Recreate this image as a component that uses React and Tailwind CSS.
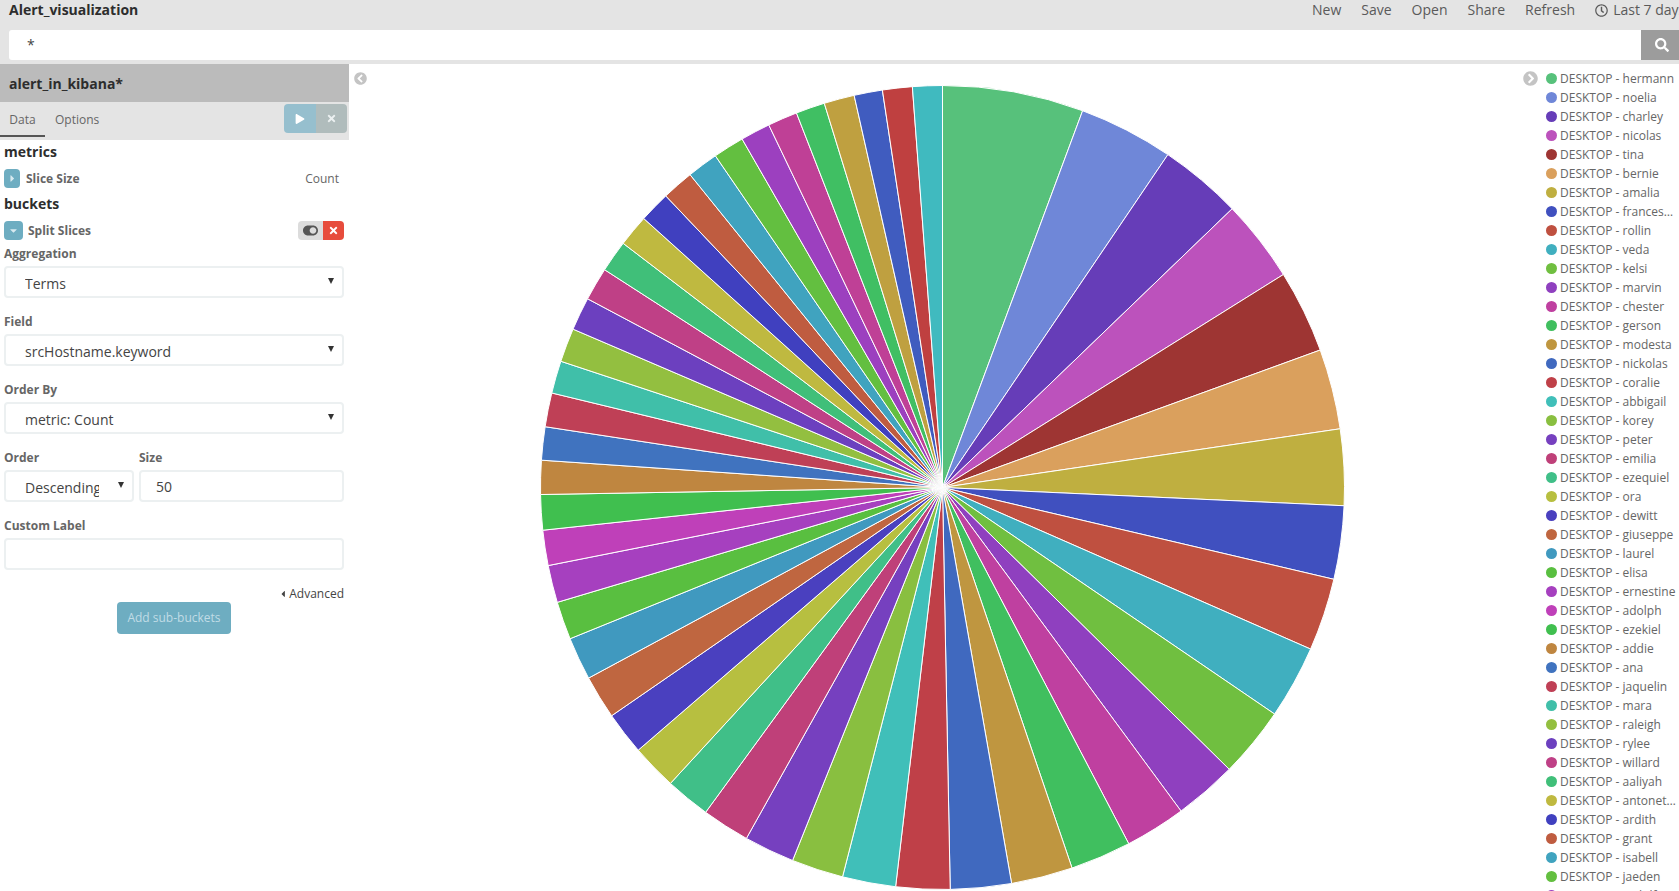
import {
  FaCaretDown,
  FaCaretLeft,
  FaCaretRight,
  FaChevronCircleLeft,
  FaChevronCircleRight,
  FaPlay,
  FaRegClock,
  FaSearch,
  FaTimes,
  FaToggleOn,
} from "react-icons/fa";

const CX = 402.5;
const CY = 402.5;
const R = 402;

// slice ends, clockwise from 12 o'clock, in degrees
const ANGLES = [
  20.4, 34.1, 46.1, 58, 70, 81.6, 92.6, 103.2, 113.7, 124.3, 134.5, 143.6, 152.4, 161.2, 170.1,
  178.9, 186.7, 194.4, 201.9, 209.2, 216.1, 222.6, 229.2, 235.4, 241.7, 247.9, 253.4, 258.8, 263.9,
  269, 273.9, 278.7, 283.6, 288.3, 293.2, 298, 302.8, 307.4, 312, 316.5, 321.1, 325.6, 330.1, 334.4,
  338.7, 342.9, 347.3, 351.4, 355.7, 360,
];

const COLORS = [
  "#57c17b", "#6f87d8", "#663db8", "#bc52bc", "#9e3533", "#daa05d", "#bfaf40", "#4050bf", "#bf5040", "#40afbf",
  "#70bf40", "#8f40bf", "#bf40a0", "#40bf5f", "#bf9640", "#4069bf", "#bf4048", "#40bfb9", "#89bf40", "#7640bf",
  "#bf4079", "#40bf88", "#b7bf40", "#4a40bf", "#bf6640", "#4099bf", "#59bf40", "#a640bf", "#bf40b9", "#40bf4f",
  "#bf8640", "#4073bf", "#bf4056", "#40bfa9", "#93bf40", "#6c40bf", "#bf4086", "#40bf79", "#bfb940", "#4040bf",
  "#bf5c40", "#40a3bf", "#63bf40", "#9c40bf", "#bf4096", "#40bf63", "#bfa040", "#405cbf", "#bf4040", "#40babf",
];

const NAMES = [
  "hermann", "noelia", "charley", "nicolas", "tina", "bernie", "amalia", "frances…", "rollin", "veda",
  "kelsi", "marvin", "chester", "gerson", "modesta", "nickolas", "coralie", "abbigail", "korey", "peter",
  "emilia", "ezequiel", "ora", "dewitt", "giuseppe", "laurel", "elisa", "ernestine", "adolph", "ezekiel",
  "addie", "ana", "jaquelin", "mara", "raleigh", "rylee", "willard", "aaliyah", "antonet…", "ardith",
  "grant", "isabell", "jaeden", "rudolf",
];

function point(deg) {
  const a = (deg * Math.PI) / 180;
  return `${(CX + R * Math.sin(a)).toFixed(2)} ${(CY - R * Math.cos(a)).toFixed(2)}`;
}

function Pie() {
  return (
    <svg width="805" height="805" viewBox="0 0 805 805" className="block">
      {ANGLES.map((end, i) => {
        const start = i === 0 ? 0 : ANGLES[i - 1];
        return (
          <path
            key={i}
            d={`M${CX} ${CY} L${point(start)} A${R} ${R} 0 0 1 ${point(end)} Z`}
            fill={COLORS[i]}
            stroke="#fff"
            strokeWidth="1"
          />
        );
      })}
    </svg>
  );
}

function Label({ children }) {
  return <div className="text-[12px] leading-[17px] font-bold text-[#666]">{children}</div>;
}

function Select({ children, clip = "mr-[24px]" }) {
  return (
    <div className="relative flex h-8 w-full items-center rounded border-2 border-[#ecf0f1] bg-white pl-[19px] text-[14px] text-[#444]">
      <span className={`${clip} block min-w-0 flex-1 overflow-hidden whitespace-nowrap pt-[2px]`}>{children}</span>
      <span className="absolute right-[8px] top-[10px] h-0 w-0 border-x-[3px] border-t-[6px] border-x-transparent border-t-[#333]" />
    </div>
  );
}

function Sidebar() {
  return (
    <aside className="w-[349px] shrink-0">
      <div className="flex h-[38px] items-center bg-[#bbb] pl-[9px] text-[14px] font-bold text-[#2d2d2d]">alert_in_kibana*</div>
      <div className="flex h-[38px] bg-[#e4e4e4] text-[12px] text-[#666]">
        <div className="flex h-[35px] w-[45px] items-center justify-center border-b-[2px] border-[#555] pt-[2px]">Data</div>
        <div className="ml-[10px] flex h-[35px] items-center">Options</div>
        <div className="ml-auto mr-[2px] mt-[2px] flex h-[29px] overflow-hidden rounded">
          <div className="flex w-[32px] items-center justify-center bg-[#96bfce] text-white"><FaPlay size={10} /></div>
          <div className="flex w-[31px] items-center justify-center bg-[#b0bcbc] text-[#ecf0f1]"><FaTimes size={11} /></div>
        </div>
      </div>

      <div className="pl-[4px] pr-[5px]">
        <div className="mt-[2px] text-[14px] font-bold leading-[20px] text-[#2d2d2d]">metrics</div>
        <div className="mt-[7px] flex h-[19px] items-center">
          <span className="flex h-[19px] w-[16px] items-center justify-center rounded-sm bg-[#6eadc1] text-[#d8eaf0]"><FaCaretRight size={11} /></span>
          <span className="ml-[6px] text-[12px] font-bold text-[#666]">Slice Size</span>
          <span className="ml-auto mr-[5px] text-[12px] text-[#666]">Count</span>
        </div>
        <div className="mt-[6px] text-[14px] font-bold leading-[20px] text-[#2d2d2d]">buckets</div>
        <div className="mt-[7px] flex h-[19px] items-center">
          <span className="flex h-[19px] w-[19px] items-center justify-center rounded-sm bg-[#6eadc1] text-[#d8eaf0]"><FaCaretDown size={11} /></span>
          <span className="ml-[5px] text-[12px] font-bold text-[#666]">Split Slices</span>
          <div className="ml-auto flex h-[19px] overflow-hidden rounded-sm">
            <span className="flex w-[25px] items-center justify-center bg-[#dcdcdc] text-[#555]"><FaToggleOn size={15} /></span>
            <span className="flex w-[21px] items-center justify-center bg-[#e74c3c] text-white"><FaTimes size={11} /></span>
          </div>
        </div>

        <div className="mt-[5px]"><Label>Aggregation</Label></div>
        <div className="mt-[4px]"><Select>Terms</Select></div>

        <div className="mt-[15px]"><Label>Field</Label></div>
        <div className="mt-[4px]"><Select>srcHostname.keyword</Select></div>

        <div className="mt-[15px]"><Label>Order By</Label></div>
        <div className="mt-[4px]"><Select>metric: Count</Select></div>

        <div className="mt-[15px] flex gap-[5px]">
          <div className="w-[130px]">
            <Label>Order</Label>
            <div className="mt-[4px]"><Select clip="mr-[33px]">Descending</Select></div>
          </div>
          <div className="flex-1">
            <Label>Size</Label>
            <div className="mt-[4px] flex h-8 items-center rounded border-2 border-[#ecf0f1] pl-[15px] text-[14px] text-[#444]">50</div>
          </div>
        </div>

        <div className="mt-[15px]"><Label>Custom Label</Label></div>
        <div className="mt-[4px] h-8 rounded border-2 border-[#ecf0f1]" />

        <div className="mt-[15px] flex items-center justify-end text-[12px] leading-[17px] text-[#444]">
          <FaCaretLeft size={10} className="mr-[1px]" />
          Advanced
        </div>
        <button className="mx-auto block h-8 w-[114px] rounded-sm bg-[#6eadc1] text-[12px] text-[#c0dce6]">Add sub-buckets</button>
      </div>
    </aside>
  );
}

function Legend() {
  return (
    <div className="absolute right-0 top-[5px] w-[151px]">
      {NAMES.map((name, i) => (
        <div key={name} className="flex h-[19px] items-center text-[12px] text-[#666]">
          <span className="ml-[18px] h-[11px] w-[11px] shrink-0 rounded-full" style={{ backgroundColor: COLORS[i] }} />
          <span className="ml-[3px] whitespace-nowrap">DESKTOP - {name}</span>
        </div>
      ))}
    </div>
  );
}

export default function App() {
  return (
    <div className="h-[891px] w-[1679px] overflow-hidden bg-white font-['Open_Sans',sans-serif]">
      <header className="bg-[#e4e4e4] pb-[4px]">
        <div className="flex h-[30px] items-start pl-[9px] text-[14px] leading-[20px] text-[#5a5a5a]">
          <div className="font-bold text-[#2d2d2d]">Alert_visualization</div>
          <nav className="ml-auto flex w-[367px] shrink-0 items-center gap-[20px] whitespace-nowrap">
            <span>New</span>
            <span>Save</span>
            <span>Open</span>
            <span>Share</span>
            <span>Refresh</span>
            <span className="flex items-center gap-[5px]"><FaRegClock size={13} />Last 7 days</span>
          </nav>
        </div>
        <div className="ml-[9px] flex h-[30px] rounded-l-[3px] bg-white">
          <div className="flex-1 pl-[18px] pt-[5px] text-[14px] leading-[20px] text-[#444]">*</div>
          <div className="flex w-[38px] items-center justify-center bg-[#9c9c9c] pl-[4px] text-white"><FaSearch size={14} /></div>
        </div>
      </header>

      <div className="flex">
        <Sidebar />
        <main className="relative h-[827px] flex-1 overflow-hidden">
          <FaChevronCircleLeft size={13} className="absolute left-[5px] top-[8px] text-[#c4c4c4]" />
          <FaChevronCircleRight size={15} className="absolute right-[141px] top-[7px] text-[#c4c4c4]" />
          <div className="ml-[191px] pt-[21px]"><Pie /></div>
          <Legend />
        </main>
      </div>
    </div>
  );
}
